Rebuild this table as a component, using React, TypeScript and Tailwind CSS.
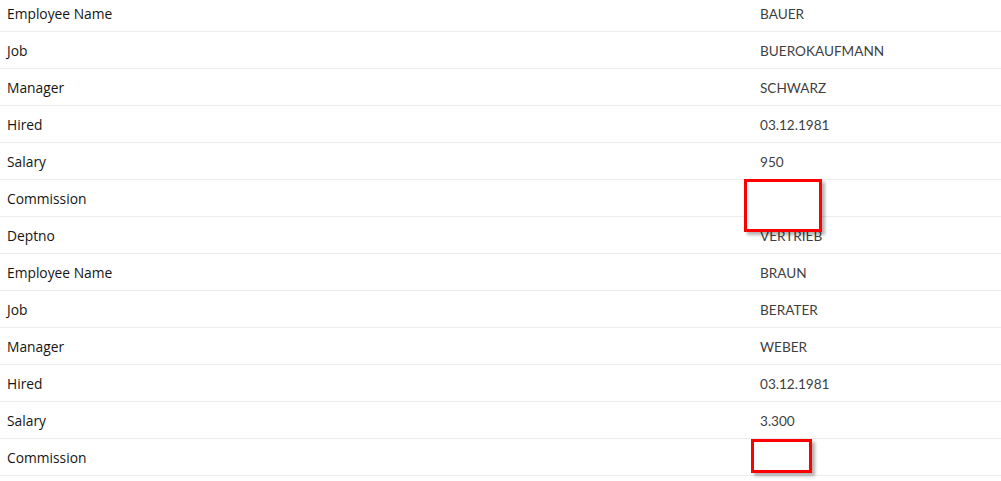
import React from "react";

const rows: [string, string][] = [
  ["Employee Name", "BAUER"],
  ["Job", "BUEROKAUFMANN"],
  ["Manager", "SCHWARZ"],
  ["Hired", "03.12.1981"],
  ["Salary", "950"],
  ["Commission", ""],
  ["Deptno", "VERTRIEB"],
  ["Employee Name", "BRAUN"],
  ["Job", "BERATER"],
  ["Manager", "WEBER"],
  ["Hired", "03.12.1981"],
  ["Salary", "3.300"],
  ["Commission", ""],
];

export default function App() {
  return (
    <div className="relative w-[1001px] h-[481px] overflow-hidden bg-white">
      <div className="-mt-[5px]">
        {rows.map(([k, v], i) => (
          <div
            key={i}
            className="flex items-center h-[37px] pt-[2px] border-b border-[#ececec]"
          >
            <div className="w-[760px] pl-[7px] text-[13.8px] text-[#161513] font-['Open_Sans',sans-serif] leading-none">
              {k}
            </div>
            <div className="pt-[2px] text-[13.6px] text-[#3f3f3f] font-['Lato',sans-serif] leading-none">
              {v}
            </div>
          </div>
        ))}
      </div>
      <div className="absolute left-[744px] top-[179px] w-[78px] h-[53px] border-[3px] border-[#ff0000] bg-white shadow-[3px_3px_3px_rgba(0,0,0,0.3)]" />
      <div className="absolute left-[751px] top-[439px] w-[61px] h-[34px] border-[3px] border-[#ff0000] bg-white shadow-[3px_3px_3px_rgba(0,0,0,0.3)]" />
    </div>
  );
}
